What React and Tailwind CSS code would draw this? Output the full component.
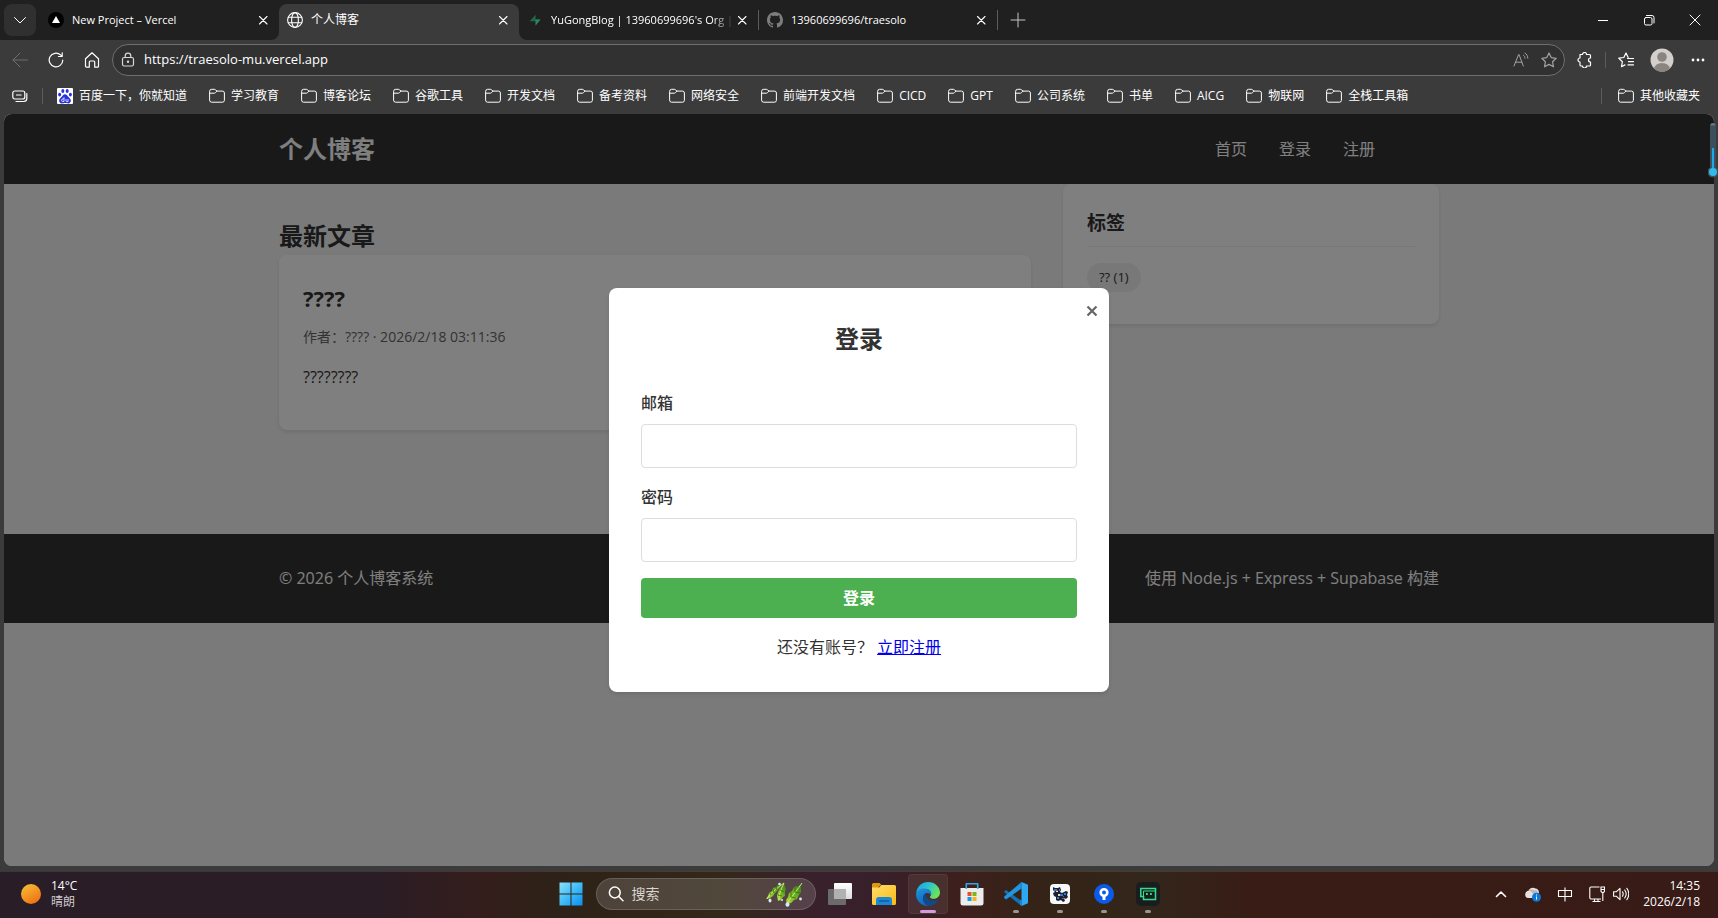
import React, { useState } from "react";

const bookmarks = [
  "学习教育",
  "博客论坛",
  "谷歌工具",
  "开发文档",
  "备考资料",
  "网络安全",
  "前端开发文档",
  "CICD",
  "GPT",
  "公司系统",
  "书单",
  "AICG",
  "物联网",
  "全栈工具箱",
];

// Thin line icon on a 16px grid
const Line = ({ children, className = "size-4", width = 1 }) => (
  <svg
    viewBox="0 0 16 16"
    className={`shrink-0 ${className}`}
    fill="none"
    stroke="currentColor"
    strokeWidth={width}
    strokeLinecap="round"
    strokeLinejoin="round"
    aria-hidden="true"
  >
    {children}
  </svg>
);

const CloseIcon = () => (
  <Line className="size-4" width={1.1}>
    <path d="M4.500 4.500l7.500 7.500M12 4.500L4.500 12" />
  </Line>
);

const FolderIcon = () => (
  <Line className="size-4" width={1}>
    <path d="M.6 3.2A1.9 1.9 0 0 1 2.5 1.3h2.8c.6 0 1 .2 1.4.6l1.2 1.2h5.6a1.9 1.9 0 0 1 1.9 1.9v7.3a1.9 1.9 0 0 1-1.9 1.9h-11A1.9 1.9 0 0 1 .6 12.300z" />
    <path d="M.8 5.200h4.400c.5 0 .9-.2 1.200-.5l1.500-1.500" />
  </Line>
);

const VercelIcon = () => (
  <svg viewBox="0 0 16 16" className="size-4 shrink-0" aria-hidden="true">
    <circle cx="8" cy="8" r="8" fill="#000" />
    <path d="M8 4l4 7H4z" fill="#fff" />
  </svg>
);

const SupabaseIcon = () => (
  <svg viewBox="0 0 16 16" className="size-4 shrink-0" aria-hidden="true">
    <path d="M8.600 2.800v4.700h4.900L8.600 13.500V9.200H2.600z" fill="#23674a" />
    <path d="M8.600 9.200v4.300l4.900-6H8.600z" fill="#2f8460" />
  </svg>
);

const GithubIcon = () => (
  <svg viewBox="0 0 16 16" className="size-4 shrink-0" aria-hidden="true">
    <path
      fill="#7d7d7d"
      d="M8 0C3.580 0 0 3.580 0 8c0 3.540 2.290 6.530 5.470 7.590.4.070.55-.17.55-.38 0-.19-.01-.82-.01-1.490-2.010.37-2.530-.49-2.690-.94-.09-.23-.48-.94-.82-1.130-.28-.15-.68-.52-.01-.53.63-.01 1.080.58 1.230.82.72 1.210 1.870.87 2.330.66.070-.52.28-.87.51-1.070-1.780-.2-3.640-.89-3.640-3.950 0-.87.31-1.590.82-2.150-.08-.2-.36-1.020.08-2.120 0 0 .67-.21 2.200.82.64-.18 1.320-.27 2-.27s1.360.09 2 .27c1.530-1.040 2.200-.82 2.200-.82.44 1.100.16 1.920.08 2.120.51.56.82 1.270.82 2.150 0 3.070-1.870 3.750-3.650 3.950.29.25.54.73.54 1.480 0 1.070-.01 1.930-.01 2.200 0 .21.15.46.55.38A8.010 8.010 0 0 0 16 8c0-4.420-3.580-8-8-8z"
    />
  </svg>
);

const GlobeIcon = () => (
  <Line className="size-4" width={1.1}>
    <circle cx="8" cy="8" r="7.400" />
    <ellipse cx="8" cy="8" rx="3.400" ry="7.400" />
    <path d="M1.300 5.300h13.400M1.300 10.700h13.400" />
  </Line>
);

const BaiduIcon = () => (
  <svg viewBox="0 0 16 16" className="size-4 shrink-0" aria-hidden="true">
    <rect width="16" height="16" rx="1" fill="#fff" />
    <g fill="#2a32dd">
      <ellipse cx="5.800" cy="3" rx="1.500" ry="2.100" />
      <ellipse cx="10.200" cy="3" rx="1.500" ry="2.100" />
      <ellipse cx="2.600" cy="6.600" rx="1.500" ry="1.900" />
      <ellipse cx="13.400" cy="6.600" rx="1.500" ry="1.900" />
      <path d="M8 6.300c1.500 0 2.200 1.300 3.200 2.400s2.700 2 2.700 3.900-1.200 2.800-2.700 2.800-2-.4-3.200-.4-1.700.4-3.200.4-2.700-.9-2.700-2.800 1.700-2.800 2.700-3.900S6.500 6.300 8 6.300z" />
    </g>
    <path
      d="M7 9.200v4.300H5.800a1.200 1.200 0 0 1 0-2.500H7M9 11v2c0 .4.200.6.600.6H11V11"
      fill="none"
      stroke="#fff"
      strokeWidth=".8"
    />
  </svg>
);

const Tab = ({ icon, title, titleClass = "text-[11px]" }) => (
  <div className="flex h-full min-w-0 flex-1 items-center px-2">
    {icon}
    <span
      className={`ml-2 min-w-0 flex-1 overflow-hidden whitespace-nowrap ${titleClass}`}
    >
      {title}
    </span>
    <button aria-label="关闭标签页" className="shrink-0">
      <CloseIcon />
    </button>
  </div>
);

const TabStrip = () => (
  <div className="flex h-10 shrink-0 bg-[#3b3b3b]">
    <div className="flex items-center rounded-br-lg bg-[#202020] pl-1">
      <button
        aria-label="标签操作"
        className="flex h-8 w-8 items-center justify-center rounded-lg bg-[#303030]"
      >
        <Line>
          <path d="M2.500 5.500L8 11l5.500-5.500" />
        </Line>
      </button>
      <div className="ml-1 flex h-full w-[239px]">
        <Tab icon={<VercelIcon />} title="New Project – Vercel" />
      </div>
    </div>
    <div className="flex w-60 bg-[#202020] pt-1">
      <div className="flex flex-1 rounded-t-lg bg-[#3b3b3b] pb-1">
        <Tab icon={<GlobeIcon />} title="个人博客" titleClass="text-xs" />
      </div>
    </div>
    <div className="flex min-w-0 flex-1 items-center rounded-bl-lg bg-[#202020]">
      <div className="flex h-full w-[239px]">
        <Tab
          icon={<SupabaseIcon />}
          title="YuGongBlog | 13960699696's Org |"
          titleClass="text-[11px] [mask-image:linear-gradient(to_right,black_88%,transparent)]"
        />
      </div>
      <span className="h-5 w-px bg-[#5c5c5c]" />
      <div className="flex h-full w-[238px]">
        <Tab icon={<GithubIcon />} title="13960699696/traesolo" />
      </div>
      <span className="h-5 w-px bg-[#5c5c5c]" />
      <button aria-label="新建标签页" className="ml-3">
        <Line className="size-4 text-[#c4c4c4]">
          <path d="M8 1v14M1 8h14" />
        </Line>
      </button>
      <div className="ml-auto flex">
        <button
          aria-label="最小化"
          className="flex w-[46px] justify-center"
        >
          <Line>
            <path d="M3 8.500h10" strokeLinecap="butt" />
          </Line>
        </button>
        <button aria-label="还原" className="flex w-[46px] justify-center">
          <Line>
            <rect x="3.500" y="5.500" width="7.500" height="7.500" rx="1.500" />
            <path d="M5.500 3.500h5.500a2 2 0 0 1 2 2v5.500" />
          </Line>
        </button>
        <button
          aria-label="关闭"
          className="flex w-[46px] justify-center"
        >
          <Line>
            <path d="M3 3l10 10M13 3L3 13" />
          </Line>
        </button>
      </div>
    </div>
  </div>
);

const StarIcon = () => (
  <Line width={1.200}>
    <path d="M8 1l2.200 4.600 5 .7-3.600 3.500.9 5L8 12.400l-4.500 2.400.9-5L.8 6.300l5-.7z" />
  </Line>
);

const Toolbar = () => (
  <div className="flex h-10 shrink-0 items-center px-3">
    <button aria-label="后退" className="text-[#6f6f6f]">
      <Line>
        <path d="M15.500 8H1M8 1L1 8l7 7" />
      </Line>
    </button>
    <button aria-label="刷新" className="ml-5">
      <Line width={1.200}>
        <path d="M14.800 8A6.800 6.800 0 1 1 12.500 2.900L14 4.200M14.200.8v3.700h-3.700" />
      </Line>
    </button>
    <button aria-label="主页" className="ml-5">
      <Line width={1.200}>
        <path d="M1.500 6.800L8 .8l6.500 6v7.400a1 1 0 0 1-1 1h-2.800V10a1 1 0 0 0-1-1H6.300a1 1 0 0 0-1 1v5.200H2.500a1 1 0 0 1-1-1z" />
      </Line>
    </button>
    <div className="ml-3 flex h-8 flex-1 items-center rounded-full border border-[#6e6e6e] bg-[#313131] pl-[7px] pr-[7px]">
      <Line className="size-4 text-[#d8d8d8]" width={1.200}>
        <rect x="2.500" y="5.500" width="11" height="8.500" rx="1.800" />
        <path d="M5.200 5.500V4a2.800 2.800 0 0 1 5.600 0v1.500" />
        <circle cx="8" cy="9.700" r=".6" fill="currentColor" />
      </Line>
      <input
        aria-label="地址"
        defaultValue="https://traesolo-mu.vercel.app"
        className="ml-2 min-w-0 flex-1 bg-transparent text-[13px] text-white outline-none"
      />
      <button aria-label="大声朗读" className="text-[#a2a2a2]">
        <Line>
          <path d="M1 14L5.600 2.500h.4L10.300 14M2.500 10.200h6.400M10.500 3.200c1 .7 1.500 1.800 1.500 3M12 1c1.800 1.200 2.800 3 2.800 5.200" />
        </Line>
      </button>
      <button aria-label="收藏此页" className="ml-3 text-[#a2a2a2]">
        <StarIcon />
      </button>
    </div>
    <button aria-label="扩展" className="ml-3">
      <Line width={1.200}>
        <path d="M3 2.500h2.500a2 2 0 0 1 4 0h3a1 1 0 0 1 1 1V6a2 2 0 1 0 0 4v3a1 1 0 0 1-1 1h-3a2 2 0 0 1-4 0H4a1 1 0 0 1-1-1v-3a2 2 0 0 1 0-4V3.500z" />
      </Line>
    </button>
    <span className="mx-3 h-4 w-px bg-[#5c5c5c]" />
    <button aria-label="收藏夹">
      <Line width={1.200}>
        <path d="M10.200 5.500L8 1 5.800 5.500l-5 .7 3.600 3.500-.9 5 3.500-1.800M9.500 6.500h6M10.500 9.700h5M10 12.900h5.500" />
      </Line>
    </button>
    <button aria-label="个人资料" className="ml-4">
      <svg viewBox="0 0 24 24" className="size-6" aria-hidden="true">
        <clipPath id="avatar">
          <circle cx="12" cy="12" r="11.500" />
        </clipPath>
        <g clipPath="url(#avatar)">
          <path d="M0 0h24v24H0z" fill="#d2cfcc" />
          <circle cx="12" cy="9" r="4.800" fill="#8a8580" />
          <ellipse cx="12" cy="21" rx="8" ry="6" fill="#8a8580" />
        </g>
      </svg>
    </button>
    <button aria-label="设置及其他" className="ml-4">
      <svg viewBox="0 0 16 16" className="size-4" fill="#fff" aria-hidden="true">
        <circle cx="3" cy="8" r="1.400" />
        <circle cx="8" cy="8" r="1.400" />
        <circle cx="13" cy="8" r="1.400" />
      </svg>
    </button>
  </div>
);

const BookmarkBar = () => (
  <nav className="flex h-[34px] shrink-0 items-center pb-0.5 pl-3 pr-[18px] text-xs leading-4">
    <button aria-label="工作区">
      <Line width={1.200}>
        <rect x=".8" y="3" width="12" height="8" rx="2" />
        <path d="M4.500 7h4.600M14.800 5.500v5a3 3 0 0 1-3 3H4" />
      </Line>
    </button>
    <span className="mx-3.5 h-4 w-px bg-[#5c5c5c]" />
    <a href="#baidu" className="mr-[22px] flex items-center gap-1.5">
      <BaiduIcon />
      百度一下，你就知道
    </a>
    <div className="flex min-w-0 flex-1 gap-[22px] overflow-hidden">
      {bookmarks.map((name) => (
        <a
          key={name}
          href="#folder"
          className="flex shrink-0 items-center gap-1.5"
        >
          <FolderIcon />
          {name}
        </a>
      ))}
    </div>
    <span className="mx-4 h-4 w-px bg-[#5c5c5c]" />
    <a href="#others" className="flex items-center gap-1.5">
      <FolderIcon />
      其他收藏夹
    </a>
  </nav>
);

const Blog = () => (
  <div className="flex h-full flex-col bg-[#f5f5f5] text-[#333]">
    <header className="bg-[#333] text-white">
      <div className="mx-auto flex max-w-[1200px] items-center justify-between px-5 py-4">
        <h1 className="text-2xl leading-[38px] font-bold">个人博客</h1>
        <nav className="mr-16 flex gap-8 leading-[26px]">
          <a href="#home">首页</a>
          <a href="#login">登录</a>
          <a href="#register">注册</a>
        </nav>
      </div>
    </header>

    <main className="mx-auto grid w-full max-w-[1200px] grid-cols-[2fr_1fr] items-start gap-8 px-5 pb-10">
      <section className="pt-8">
        <h2 className="text-2xl leading-[39px] font-bold">最新文章</h2>
        <article className="rounded-lg bg-white px-6 pt-6 pb-10 shadow-[0_2px_4px_rgba(0,0,0,0.1)]">
          <h3 className="mb-2 text-[22px] leading-[38px] font-bold">????</h3>
          <p className="mb-4 text-sm leading-[23px] text-[#666]">
            作者：???? · 2026/2/18 03:11:36
          </p>
          <p className="leading-[26px]">????????</p>
        </article>
      </section>
      <aside className="rounded-lg bg-white px-6 pt-6 pb-8 shadow-[0_2px_4px_rgba(0,0,0,0.1)]">
        <h3 className="mb-4 border-b border-[#eee] pb-2 text-[19px] leading-[30px] font-bold">
          标签
        </h3>
        <a
          href="#tag"
          className="inline-flex rounded-full bg-[#f0f0f0] px-3 py-1 text-[13px] leading-[21px]"
        >
          ?? (1)
        </a>
      </aside>
    </main>

    <footer className="mt-16 bg-[#333] text-white">
      <div className="mx-auto flex max-w-[1200px] justify-between px-5 py-8 leading-[25px]">
        <p>© 2026 个人博客系统</p>
        <p>使用 Node.js + Express + Supabase 构建</p>
      </div>
    </footer>
  </div>
);

const LoginModal = ({ onClose }) => {
  const [formData, setFormData] = useState({ email: "", password: "" });

  const handleChange = (e) => {
    setFormData({ ...formData, [e.target.name]: e.target.value });
  };

  return (
    <div className="absolute inset-0 flex items-center justify-center bg-black/50">
      <div
        role="dialog"
        aria-labelledby="login-title"
        className="relative w-full max-w-[500px] rounded-lg bg-white p-8 text-[#333] shadow-[0_2px_4px_rgba(0,0,0,0.1)]"
      >
        <button
          aria-label="关闭"
          onClick={onClose}
          className="absolute top-4 right-[11px] text-[#666]"
        >
          <svg
            viewBox="0 0 12 14"
            className="h-3.5 w-3"
            stroke="currentColor"
            strokeWidth="2.200"
            aria-hidden="true"
          >
            <path d="M1.500 2.500l9 9M10.500 2.500l-9 9" />
          </svg>
        </button>
        <h2
          id="login-title"
          className="mb-8 text-center text-2xl leading-[38px] font-bold"
        >
          登录
        </h2>
        <form onSubmit={(e) => e.preventDefault()}>
          <label
            htmlFor="email"
            className="mb-2 block leading-[26px] font-medium"
          >
            邮箱
          </label>
          <input
            id="email"
            type="email"
            name="email"
            value={formData.email}
            onChange={handleChange}
            className="mb-4 block h-11 w-full rounded border border-[#ddd] px-3"
          />
          <label
            htmlFor="password"
            className="mb-2 block leading-[26px] font-medium"
          >
            密码
          </label>
          <input
            id="password"
            type="password"
            name="password"
            value={formData.password}
            onChange={handleChange}
            className="mb-4 block h-11 w-full rounded border border-[#ddd] px-3"
          />
          <button
            type="submit"
            className="block h-10 w-full rounded bg-[#4caf50] font-bold text-white"
          >
            登录
          </button>
        </form>
        <p className="mt-4 text-center leading-[26px]">
          还没有账号？{" "}
          <a href="#register" className="text-[#0000ee] underline">
            立即注册
          </a>
        </p>
      </div>
    </div>
  );
};

// Small temperature slider that floats on the right edge of the window
const Gauge = () => (
  <svg
    viewBox="0 0 10 58"
    className="absolute top-[122px] right-0 h-[58px] w-2.5"
    aria-hidden="true"
  >
    <rect x="2" y="1" width="6" height="52" rx="3" fill="#3d4f5a" />
    <path d="M2.500 3.500a2.500 2.500 0 0 1 5 0" fill="#6b7780" />
    <circle cx="5" cy="50" r="5.600" fill="#3d4f5a" />
    <rect x="4" y="26" width="2" height="24" fill="#1ea7e8" />
    <circle cx="5" cy="50" r="4" fill="#33b9ea" />
  </svg>
);

const TaskItem = ({ label, active, running, children }) => (
  <button
    aria-label={label}
    className={`relative flex h-10 w-11 items-center justify-center ${
      active
        ? "before:absolute before:inset-x-0.5 before:inset-y-0 before:rounded before:border before:border-white/5 before:bg-white/7"
        : ""
    }`}
  >
    <svg viewBox="0 0 24 24" className="relative size-6" aria-hidden="true">
      {children}
    </svg>
    {running && (
      <span className="absolute bottom-px h-[3px] w-1.5 rounded-full bg-[#9c9590]" />
    )}
    {active && (
      <span className="absolute bottom-px h-[3px] w-4 rounded-full bg-[#d69ae0]" />
    )}
  </button>
);

const Leaves = () => (
  <svg viewBox="0 0 38 26" className="h-[26px] w-[38px]" aria-hidden="true">
    <defs>
      <linearGradient id="leaf" x1="0" y1="1" x2="1" y2="0">
        <stop offset="0" stopColor="#b5d93a" />
        <stop offset=".5" stopColor="#6fb022" />
        <stop offset="1" stopColor="#2f6d12" />
      </linearGradient>
    </defs>
    <g fill="url(#leaf)">
      <path d="M19 2l-3 1-3 1-2 2-3 1-1 3-3 2-1 3-2 3 4-1 3-2 2-3 3-3 3-4z" />
      <path d="M19 2l-4 5-2 4-1 4 1 5 3-1 2-3 2-1v-4l1-3-1-3z" />
      <path d="M37 2l-4 3-4 1-2 4-3 2-1 4-2 3 1 4 4-1 3-3 3-1 2-4 2-3 0-5z" />
    </g>
    <path
      d="M19 2C14 6 7 10 2 18M19 2c-2 5-5 9-5 17M37 2c-4 6-9 12-15 20"
      stroke="#d6ee86"
      strokeWidth=".9"
      fill="none"
    />
    <path
      d="M8 8l1 4M11 6l1 3M5 12l1 2M15 9l4 2M13 14l4 1M30 6v5l5 1M26 11v5l5 1"
      stroke="#2d6413"
      strokeWidth=".7"
      fill="none"
    />
    <g fill="#d5ecf8">
      <ellipse cx="5" cy="19.500" rx="1.500" ry="2" />
      <ellipse cx="22.500" cy="23.500" rx="2" ry="2.300" />
      <circle cx="14.500" cy="3" r="1.300" />
      <circle cx="35.500" cy="18" r="1.400" />
      <circle cx="17" cy="19" r="1" />
    </g>
  </svg>
);

const Taskbar = () => (
  <div className="grid h-[47px] shrink-0 grid-cols-[1fr_auto_1fr] items-center border-t border-white/10 bg-[linear-gradient(to_right,#291d27_0%,#2b1d25_22%,#341d1c_28%,#2e2117_32%,#33281a_42%,#38212a_47%,#38202a_51%,#3d201c_56%,#352317_60%,#33261a_67%,#381c15_73%,#381b16_100%)] pb-0.5">
    <button className="ml-[21px] flex items-center gap-2.5 text-left text-xs leading-4">
      <svg viewBox="0 0 20 20" className="size-5" aria-hidden="true">
        <defs>
          <linearGradient id="sun" x1=".2" y1="0" x2=".8" y2="1">
            <stop offset="0" stopColor="#f6bd36" />
            <stop offset="1" stopColor="#ef6c10" />
          </linearGradient>
        </defs>
        <circle cx="10" cy="10" r="10" fill="url(#sun)" />
      </svg>
      <span>
        14°C
        <br />
        <span className="text-[#cfc9cc]">晴朗</span>
      </span>
    </button>

    <div className="flex items-center">
      <TaskItem label="开始">
        <defs>
          <linearGradient id="win" x1="0" y1="0" x2="1" y2="1">
            <stop offset="0" stopColor="#8be0fb" />
            <stop offset=".5" stopColor="#3fbcf7" />
            <stop offset="1" stopColor="#0a8ff0" />
          </linearGradient>
        </defs>
        <path
          d="M.5.5h11v11H.5zM12.500.5h11v11h-11zM.5 12.500h11v11H.5zM12.500 12.500h11v11h-11z"
          fill="url(#win)"
        />
      </TaskItem>
      <div className="ml-[3px] mr-0.5 flex h-8 w-[220px] items-center rounded-full border border-white/15 bg-white/15 pl-[11px] pr-3">
        <Line className="size-4 text-white" width={1.500}>
          <circle cx="6.800" cy="6.500" r="5.400" />
          <path d="M10.800 10.500L15 14.800" />
        </Line>
        <input
          aria-label="搜索"
          placeholder="搜索"
          className="ml-2 min-w-0 flex-1 bg-transparent text-sm outline-none placeholder:text-[#d9d4cf]"
        />
        <Leaves />
      </div>
      <TaskItem label="任务视图">
        <defs>
          <linearGradient id="tv" x1="0" y1="0" x2="0" y2="1">
            <stop offset="0" stopColor="#fff" />
            <stop offset="1" stopColor="#dcdcdc" />
          </linearGradient>
        </defs>
        <rect x="6" y="1" width="18" height="16" rx="1" fill="url(#tv)" />
        <rect x="0" y="7" width="18" height="16" rx="1" fill="#6b6b6b" />
        <path d="M6 7h12v10H6z" fill="#b1b1b1" />
      </TaskItem>
      <TaskItem label="文件资源管理器">
        <defs>
          <linearGradient id="fe" x1="0" y1="0" x2="1" y2="1">
            <stop offset="0" stopColor="#ffdf6b" />
            <stop offset="1" stopColor="#f8b916" />
          </linearGradient>
        </defs>
        <path d="M0 2.500A1.500 1.500 0 0 1 1.500 1h6l2.500 2.500h-2L6 6H0z" fill="#dd9a0c" />
        <path d="M0 5.500h7l2.500-2.500h13A1.500 1.500 0 0 1 24 4.500V21.500A1.500 1.500 0 0 1 22.500 23h-21A1.500 1.500 0 0 1 0 21.500z" fill="url(#fe)" />
        <path d="M4 23v-5a3 3 0 0 1 3-3h10a3 3 0 0 1 3 3v5z" fill="#1c87d3" />
        <path d="M7.500 19h9" stroke="#0a5ea8" strokeWidth="1.500" strokeLinecap="round" />
      </TaskItem>
      <TaskItem label="Microsoft Edge" active>
        <defs>
          <linearGradient id="edgeTop" x1="0" y1="0" x2="1" y2=".5">
            <stop offset="0" stopColor="#1c9de0" />
            <stop offset=".5" stopColor="#2cc3cf" />
            <stop offset="1" stopColor="#6be35b" />
          </linearGradient>
          <linearGradient id="edgeLow" x1="0" y1="0" x2=".4" y2="1">
            <stop offset="0" stopColor="#1b93dd" />
            <stop offset="1" stopColor="#1268c0" />
          </linearGradient>
        </defs>
        <path
          d="M.3 10.800C.9 4.700 5.800 0 12 0c6.700 0 12 5 12 10.500 0 3.700-2.800 6.300-6.200 6.300-2.500 0-3.800-.9-3.800-1.800s1.200-1.200 1.200-3.200c0-2.600-2.500-4.800-5.900-4.800-4 0-7.600 2-9 3.800z"
          fill="url(#edgeTop)"
        />
        <path
          d="M0 12.200C.2 8.500 4.500 6.300 9 6.600c3.600.2 6.200 2.400 6.200 5.200 0 .6-.1 1-.3 1.400-.8-1.500-2-2.200-3.400-2.200-2.800 0-4.600 2.500-4.600 5.300 0 3.500 2.500 6.300 5.600 7.700C5.700 24.200 0 18.900 0 12.200z"
          fill="url(#edgeLow)"
        />
        <path
          d="M9.500 11.500c-1.600 1-2.600 2.800-2.600 4.800 0 4.500 3.800 7.700 7.100 7.600 3.600-.5 6.600-2.600 8.300-5.300.3-.5-.1-.8-.5-.6-1 .5-2.300.9-4 .9-4.500 0-8.300-2.600-8.300-7.400z"
          fill="#114a8b"
        />
      </TaskItem>
      <TaskItem label="Microsoft Store">
        <path d="M.5 6h23v15a2.500 2.500 0 0 1-2.500 2.500H3A2.500 2.500 0 0 1 .5 21z" fill="#ececec" />
        <path d="M6.300 7V1.800h11.400V7" fill="none" stroke="#2fa9e8" strokeWidth="1.600" strokeLinejoin="round" />
        <path d="M7.500 10h4v4h-4z" fill="#e8502a" />
        <path d="M12.500 10h4v4h-4z" fill="#7ab51d" />
        <path d="M7.500 15h4v4h-4z" fill="#139ce0" />
        <path d="M12.500 15h4v4h-4z" fill="#f8b31c" />
      </TaskItem>
      <TaskItem label="Visual Studio Code" running>
        <path d="M.2 9.500L2 8l15.500 11v5L.3 10.200z" fill="#1272b8" />
        <path d="M17.500 0v6.500L2 17.500.3 16c-.4-.4-.4-1 0-1.400z" fill="#2196e0" />
        <path d="M17.500 0L24 2.800v18.400L17.500 24z" fill="#2ea8f0" />
        <path d="M17.500 0L16 1.500v5l1.500 0zM17.500 24L16 22.500v-5l1.500 1z" fill="#1f8ad2" />
      </TaskItem>
      <TaskItem label="Lucario" running>
        <rect x="2" y="2" width="20" height="20" rx="4" fill="#f8f8f8" />
        <path d="M5 5l2 1 3 0 2-1 1 3-1 2 2 1 4-2 2 1-1 3 1 2-2 2-2-1 1 3-2 1-2-2-3 1-2-1 0-3-2-1-1-3 2-1-2-2z" fill="#1c2130" />
        <path d="M6 7h3v2H6zM11 7h1v2h-1zM12 12h3v2h-3zM16 11h2v2h-2zM9 15h2v2H9zM14 16h2v1h-2z" fill="#3078cf" />
        <path d="M8 9h2v1H8zM10 12h2v2h-2z" fill="#e8d9a0" />
        <path d="M9 8h1v1H9zM15 14h1v1h-1z" fill="#c83b3b" />
      </TaskItem>
      <TaskItem label="Sourcetree" running>
        <circle cx="12" cy="12" r="10" fill="#0b5be8" />
        <circle cx="12" cy="10.500" r="3.300" fill="none" stroke="#fff" strokeWidth="2.600" />
        <path d="M10.500 13h3v5h-3z" fill="#fff" />
      </TaskItem>
      <TaskItem label="Trae" running>
        <rect width="24" height="24" rx="5" fill="#1a1d1f" />
        <path d="M4.800 6.500v8h2.700v3h12v-11z" fill="none" stroke="#32e08a" strokeWidth="1.500" />
        <path d="M7.500 14.500V9h12" fill="none" stroke="#32e08a" strokeWidth="1" />
        <path d="M10 11h1.800v2H10zM14 11h1.800v2H14z" fill="#32e08a" />
      </TaskItem>
    </div>

    <div className="flex items-center justify-end pr-[18px]">
      <button aria-label="显示隐藏的图标">
        <Line width={1.600}>
          <path d="M3.500 10.500L8 6l4.500 4.500" />
        </Line>
      </button>
      <button aria-label="OneDrive" className="ml-4">
        <svg viewBox="0 0 16 16" className="size-4" aria-hidden="true">
          <path d="M.3 9.500C-.2 6.800 1.500 5 3.500 4.800 4.500 2 8 .8 10.500 2.500c2 0 3.700 2 3.400 4.500L8 12H3C1.500 12 .5 11 .3 9.500z" fill="#e6e1de" />
          <path d="M3.500 4.800C6 4.800 8 6.500 9 10.500l4-4.500C12 4.500 11 4 9.500 4.500 8 3 5 3 3.500 4.800z" fill="#bdb6b2" />
          <circle cx="11.500" cy="11.200" r="4.500" fill="#0a78d6" />
          <path d="M11.500 10.500v3M11.500 8.500v1" stroke="#fff" strokeWidth="1" />
        </svg>
      </button>
      <button aria-label="输入法" className="ml-4">
        <Line width={1.100}>
          <path d="M1.500 4.500h13v6h-13zM8 1.500v14" strokeLinecap="butt" />
        </Line>
      </button>
      <button aria-label="网络和音量" className="ml-4 flex gap-2">
        <svg
          viewBox="0 0 16 16"
          className="size-4"
          fill="none"
          stroke="#fff"
          strokeWidth="1.100"
          aria-hidden="true"
        >
          <path d="M10.500 1H2A1.300 1.300 0 0 0 .8 2.300v9.400A1.300 1.300 0 0 0 2 13h10M3.500 15.500h8M5.500 13v2.500M9 13v2.500" />
          <path d="M12 1h3.500v4.500L14.500 6.500h-1.500L12 5.500zM12 3.500h3.500M13.800 6.500V15" />
        </svg>
        <Line width={1.100}>
          <path d="M.6 5.800h2.600L7 2.300v11.400L3.200 10.200H.6zM9.500 5.800c.8 1.300.8 3.100 0 4.400M11.700 4c1.700 2.300 1.700 5.700 0 8M13.800 2.300c2.400 3.400 2.400 8 0 11.400" />
        </Line>
      </button>
      <button className="ml-3.5 text-right text-xs leading-4">
        14:35
        <br />
        2026/2/18
      </button>
    </div>
  </div>
);

const App = () => {
  const [showLogin, setShowLogin] = useState(true);

  return (
    <div className="relative flex h-screen flex-col overflow-hidden bg-[#3b3b3b] font-['Open_Sans','Noto_Sans_CJK_SC',sans-serif] text-white">
      <TabStrip />
      <Toolbar />
      <BookmarkBar />
      <div className="relative mx-1 mb-[5px] min-h-0 flex-1 overflow-hidden rounded-lg">
        <Blog />
        {showLogin && <LoginModal onClose={() => setShowLogin(false)} />}
      </div>
      <Gauge />
      <Taskbar />
    </div>
  );
};

export default App;
